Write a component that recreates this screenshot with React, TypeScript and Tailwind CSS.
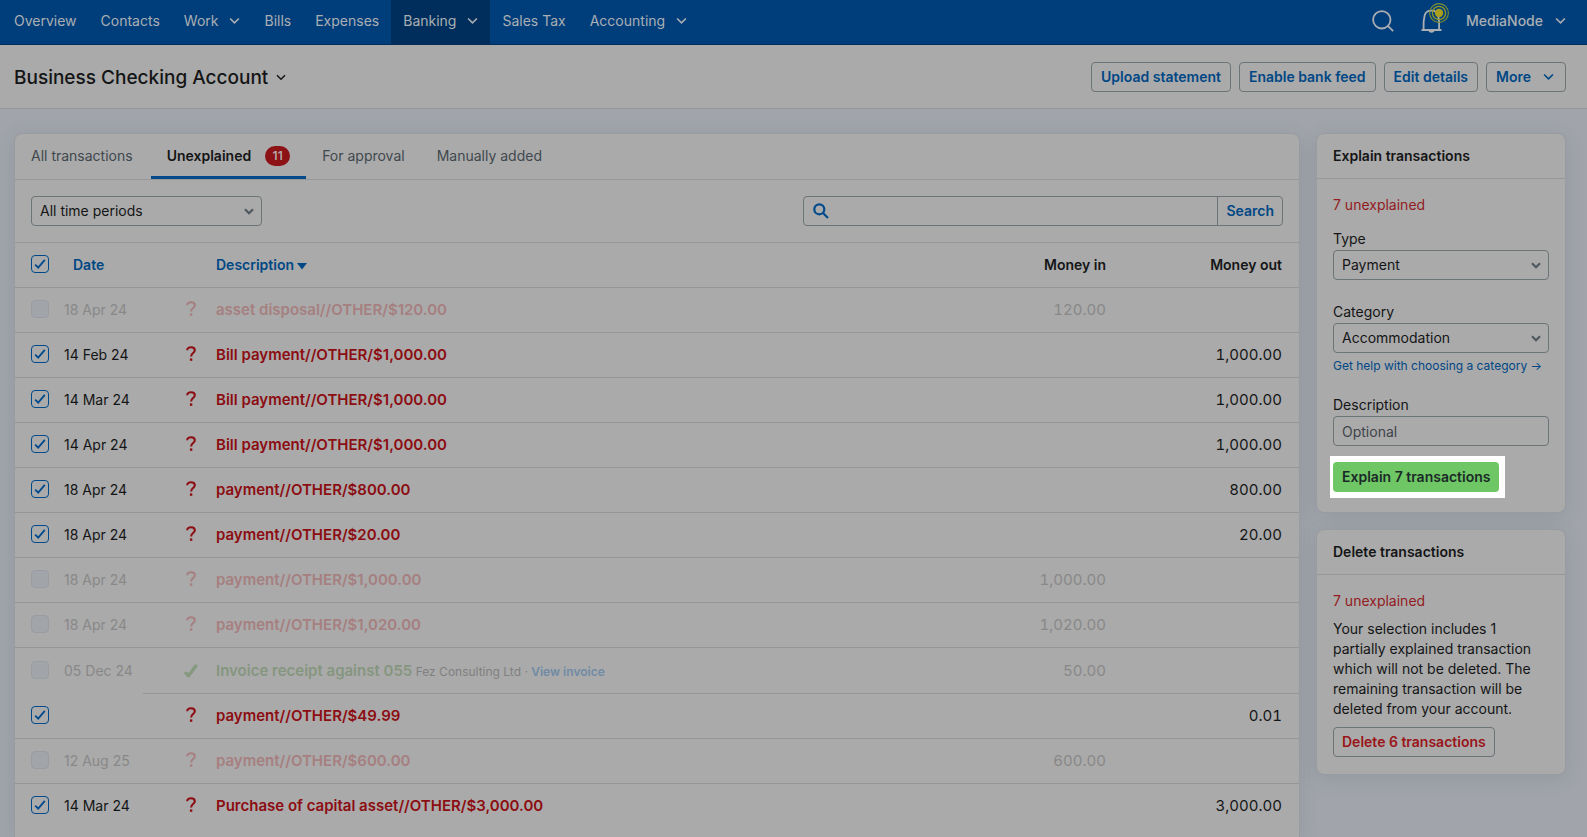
import React from 'react';
import clsx from 'clsx';

interface Transaction {
    id: number;
    date: string;
    title: string;
    moneyIn?: string;
    moneyOut?: string;
    selected?: boolean;
    explained?: boolean;
    contact?: string;
    partial?: boolean;
}

const navItems = [
    { label: 'Overview' },
    { label: 'Contacts' },
    { label: 'Work', menu: true },
    { label: 'Bills' },
    { label: 'Expenses' },
    { label: 'Banking', menu: true, active: true },
    { label: 'Sales Tax' },
    { label: 'Accounting', menu: true },
];

const transactions: Transaction[] = [
    { id: 1, date: '18 Apr 24', title: 'asset disposal//OTHER/$120.00', moneyIn: '120.00' },
    { id: 2, date: '14 Feb 24', title: 'Bill payment//OTHER/$1,000.00', moneyOut: '1,000.00', selected: true },
    { id: 3, date: '14 Mar 24', title: 'Bill payment//OTHER/$1,000.00', moneyOut: '1,000.00', selected: true },
    { id: 4, date: '14 Apr 24', title: 'Bill payment//OTHER/$1,000.00', moneyOut: '1,000.00', selected: true },
    { id: 5, date: '18 Apr 24', title: 'payment//OTHER/$800.00', moneyOut: '800.00', selected: true },
    { id: 6, date: '18 Apr 24', title: 'payment//OTHER/$20.00', moneyOut: '20.00', selected: true },
    { id: 7, date: '18 Apr 24', title: 'payment//OTHER/$1,000.00', moneyIn: '1,000.00' },
    { id: 8, date: '18 Apr 24', title: 'payment//OTHER/$1,020.00', moneyIn: '1,020.00' },
    { id: 9, date: '05 Dec 24', title: 'Invoice receipt against 055', moneyIn: '50.00', explained: true, contact: 'Fez Consulting Ltd' },
    { id: 10, date: '', title: 'payment//OTHER/$49.99', moneyOut: '0.01', selected: true, partial: true },
    { id: 11, date: '12 Aug 25', title: 'payment//OTHER/$600.00', moneyIn: '600.00' },
    { id: 12, date: '14 Mar 24', title: 'Purchase of capital asset//OTHER/$3,000.00', moneyOut: '3,000.00', selected: true },
];

function Chevron({ className }: { className?: string }) {
    return (
        <svg viewBox="0 0 12 8" fill="none" stroke="currentColor" strokeWidth="1.8" className={clsx('shrink-0', className || 'h-2 w-3')} aria-hidden="true">
            <path d="M1.2 1.3 6 6.1l4.8-4.8" />
        </svg>
    );
}

function CheckBox({ label, checked, disabled }: { label: string; checked?: boolean; disabled?: boolean }) {
    return (
        <span className="mb-0.5 grid w-[18px] place-items-center">
            <input
                type="checkbox"
                aria-label={label}
                defaultChecked={checked}
                disabled={disabled}
                className="peer col-start-1 row-start-1 h-[18px] w-[18px] appearance-none rounded border border-[#004a8c] disabled:border-[#999da2] disabled:bg-[#a1a4a8]"
            />
            <svg viewBox="0 0 12 12" fill="none" stroke="#004a8c" strokeWidth="1.8" className="pointer-events-none col-start-1 row-start-1 hidden h-3 w-3 peer-checked:block" aria-hidden="true">
                <path d="M1.2 6.6 4.2 9.6 10.8 1.8" />
            </svg>
        </span>
    );
}

function Select({ id, value, label }: { id: string; value: string; label?: string }) {
    return (
        <span className="grid items-center">
            <select id={id} aria-label={label} className="col-start-1 row-start-1 h-[30px] w-full appearance-none rounded border border-[#6d7478] bg-transparent px-2 text-[#141516]">
                <option>{value}</option>
            </select>
            <svg viewBox="0 0 10 7" fill="none" stroke="#4f595f" strokeWidth="2.2" className="pointer-events-none col-start-1 row-start-1 mr-2 h-[7px] w-2.5 justify-self-end" aria-hidden="true">
                <path d="M1 1.2 5 5.2l4-4" />
            </svg>
        </span>
    );
}

function Button({ children, className }: { children: React.ReactNode; className?: string }) {
    return (
        <button type="button" className={clsx('flex h-[30px] items-center rounded border border-[#6d7478] font-semibold whitespace-nowrap', className || 'px-[9px] text-[#004785]')}>
            {children}
        </button>
    );
}

function Panel({ title, children }: { title: string; children: React.ReactNode }) {
    return (
        <section className="rounded-lg border border-[#989ba0] bg-[#aaaaaa] shadow-[0_4px_20px_rgba(40,60,90,0.12)]">
            <h2 className="flex h-[45px] items-center border-b border-[#97989a] px-4 font-semibold">{title}</h2>
            <div className="px-4 pt-4 pb-[17px]">{children}</div>
        </section>
    );
}

function TransactionRow({ item }: { item: Transaction }) {
    const border = 'border-t border-[#959697]';
    return (
        <tr className={clsx('text-[15px]', item.contact ? 'h-[46px]' : 'h-[45px]', item.selected ? 'text-[#141516]' : 'text-[#888888]')}>
            <td className={clsx('pl-4', !item.partial && border)}>
                <CheckBox label={'Select ' + item.title} checked={item.selected} disabled={!item.selected} />
            </td>
            <td className={clsx('text-sm whitespace-nowrap', !item.partial && border)}>{item.date}</td>
            <td className={border}>
                {item.explained ? (
                    <svg viewBox="0 0 14 14" fill="none" stroke="#85997f" strokeWidth="3.4" strokeLinecap="round" strokeLinejoin="round" className="ml-[41px] h-[14px] w-[14px]" aria-label="Explained">
                        <path d="M2 9.2 4.6 11.8 11.8 2" />
                    </svg>
                ) : (
                    <svg viewBox="0 0 10 15" fill="none" stroke={item.selected ? '#8c0d12' : '#a67f80'} strokeWidth="2.1" className="ml-[43px] mb-1 h-[15px] w-2.5" aria-label="Unexplained">
                        <path d="M1.2 4.2C1.2 2.3 2.8 1.2 5 1.2s3.8 1.1 3.8 3c0 2.9-3.7 2.7-3.7 6.2" />
                        <path d="M3.9 13.6h2.4" strokeWidth="2.4" />
                    </svg>
                )}
            </td>
            <td className={clsx('font-semibold', border, item.explained ? 'text-[#85967f]' : item.selected ? 'text-[#8c0d12]' : 'text-[#a67f80]')}>
                {item.title}
                {item.contact && (
                    <span className="text-xs font-normal text-[#808080]">
                        {' '}{item.contact} · <a href="#invoice" className="font-semibold text-[#708aa5]">View invoice</a>
                    </span>
                )}
            </td>
            <td className={clsx('text-right tabular-nums', border)}>{item.moneyIn}</td>
            <td className={clsx('pr-[17px] text-right tabular-nums', border)}>{item.moneyOut}</td>
        </tr>
    );
}

function TopBar() {
    return (
        <header className="flex h-[45px] items-stretch border-b border-[#002c57] bg-[#003e7b] pr-[21px] pl-0.5 text-[#aaaeb3]">
            <nav className="flex flex-1 items-stretch">
                {navItems.map((item) => (
                    <a key={item.label} href="#nav" className={clsx('flex items-center gap-[11px] px-3 pb-0.5', item.active && 'bg-[#002e5c]')}>
                        {item.label}
                        {item.menu && <Chevron className="h-2 w-[11px]" />}
                    </a>
                ))}
            </nav>
            <div className="flex items-center">
                <button type="button" aria-label="Search" className="mr-[27px] pb-0.5">
                    <svg viewBox="0 0 22 22" fill="none" stroke="currentColor" strokeWidth="1.8" className="h-[22px] w-[22px]">
                        <circle cx="9.8" cy="9.8" r="8.7" />
                        <path d="m15.8 15.8 5.4 5.4" />
                    </svg>
                </button>
                <button type="button" aria-label="Notifications" className="mr-[17px]">
                    <svg viewBox="0 0 28 32" fill="none" className="h-8 w-7 overflow-visible">
                        <path d="M0.5 24H20.5M2.6 24v-8.4l1-6C4.3 6.400 6.500 4.600 10.300 4.600s6.300 1.800 6.900 5l.9 6V24" stroke="currentColor" strokeWidth="1.8" />
                        <path d="M7.400 24.600h6.200c-.4 1.600-1.500 2.200-3.100 2.200s-2.700-.6-3.100-2.200Z" fill="currentColor" />
                        <circle cx="18" cy="7" r="9.400" stroke="#7f8f32" strokeWidth="1.1" />
                        <circle cx="18" cy="7" r="6.600" stroke="#8f9928" strokeWidth="1.3" />
                        <circle cx="18" cy="7" r="4.200" fill="#aa9f1c" />
                    </svg>
                </button>
                <button type="button" className="flex items-center gap-3 pb-0.5 font-medium">
                    MediaNode
                    <Chevron className="h-2 w-[11px]" />
                </button>
            </div>
        </header>
    );
}

export default function App() {
    return (
        <div className="flex min-h-screen flex-col bg-[#a1a5ab] font-['Inter',sans-serif] text-sm leading-5 text-[#141516]">
            <TopBar />

            <div className="flex h-16 items-center justify-between border-b border-[#949699] bg-[#aaaaaa] pr-[21px] pl-[14px]">
                <h1 className="flex items-center gap-2 pt-0.5 text-[19px] font-medium">
                    Business Checking Account
                    <Chevron className="h-[7px] w-2.5" />
                </h1>
                <div className="flex gap-2">
                    <Button>Upload statement</Button>
                    <Button>Enable bank feed</Button>
                    <Button>Edit details</Button>
                    <Button>
                        <span className="mr-3">More</span>
                        <Chevron className="mr-0.5 h-2 w-[11px]" />
                    </Button>
                </div>
            </div>

            <div className="flex flex-1 gap-4 pt-6 pr-[21px] pl-[14px]">
                <main className="min-w-0 flex-1 rounded-t-lg border border-b-0 border-[#989ba0] bg-[#aaaaaa] shadow-[0_4px_20px_rgba(40,60,90,0.12)]">
                    <nav className="flex h-[46px] border-b border-[#97989a] text-[#40484e]">
                        <a href="#all" className="flex items-center pr-[18px] pb-0.5 pl-4">All transactions</a>
                        <a href="#unexplained" className="flex items-center gap-[14px] border-b-[3px] border-[#004a8c] px-4 pt-px font-semibold text-[#141516]">
                            Unexplained
                            <span className="flex h-5 w-[25px] items-center justify-center rounded-full bg-[#8c1216] text-xs text-[#b4a8a8]">11</span>
                        </a>
                        <a href="#approval" className="flex items-center px-4 pb-0.5">For approval</a>
                        <a href="#manual" className="flex items-center px-4 pb-0.5">Manually added</a>
                    </nav>

                    <div className="flex items-center justify-between border-b border-[#97989a] p-4">
                        <div className="w-[231px]">
                            <Select id="period" label="Time period" value="All time periods" />
                        </div>
                        <form className="flex h-[30px] w-[480px] items-center rounded border border-[#6d7478]">
                            <svg viewBox="0 0 16 16" fill="none" stroke="#004a8c" strokeWidth="2.2" className="ml-[9px] h-4 w-4 shrink-0" aria-hidden="true">
                                <circle cx="6.3" cy="6.3" r="5" />
                                <path d="m10 10 5 5" />
                            </svg>
                            <input type="search" aria-label="Search transactions" className="h-full min-w-0 flex-1 bg-transparent px-2 outline-none" />
                            <button type="button" className="h-full border-l border-[#6d7478] px-2 font-semibold text-[#004785]">Search</button>
                        </form>
                    </div>

                    <table className="w-full table-fixed border-separate border-spacing-0">
                        <thead>
                            <tr className="h-[44px] text-left">
                                <th className="w-[49px] pl-4"><CheckBox label="Select all" checked /></th>
                                <th className="w-[79px] pl-[9px] font-semibold"><a href="#date" className="text-[#004785]">Date</a></th>
                                <th className="w-[73px]"></th>
                                <th className="font-semibold">
                                    <a href="#description" className="flex items-center gap-[3px] text-[#004785]">
                                        Description
                                        <svg viewBox="0 0 10 7" fill="currentColor" className="mt-[3px] h-[7px] w-2.5" aria-hidden="true"><path d="M0 0h10L5 6.6Z" /></svg>
                                    </a>
                                </th>
                                <th className="w-[140px] text-right font-semibold">Money in</th>
                                <th className="w-[193px] pr-[17px] text-right font-semibold">Money out</th>
                            </tr>
                        </thead>
                        <tbody>
                            {transactions.map((item) => (
                                <TransactionRow key={item.id} item={item} />
                            ))}
                        </tbody>
                    </table>
                </main>

                <aside className="flex w-[250px] shrink-0 flex-col gap-4">
                    <Panel title="Explain transactions">
                        <p className="text-[#931a1f]">7 unexplained</p>
                        <div className="mt-[14px]">
                            <label htmlFor="type" className="mb-px block">Type</label>
                            <Select id="type" value="Payment" />
                        </div>
                        <div className="mt-[22px]">
                            <label htmlFor="category" className="mb-px block">Category</label>
                            <Select id="category" value="Accommodation" />
                            <a href="#help" className="mt-[3px] block text-xs leading-5 whitespace-nowrap text-[#004785]">Get help with choosing a category →</a>
                        </div>
                        <div className="mt-[19px]">
                            <label htmlFor="description" className="mb-px block">Description</label>
                            <input id="description" type="text" placeholder="Optional" className="block h-[30px] w-full rounded border border-[#6d7478] bg-transparent px-2 placeholder:text-[#40444a]" />
                        </div>
                        {/* spotlight around the primary action */}
                        <div className="mt-[10px] -mb-[3px] -ml-[3px] w-fit bg-white py-1.5 pr-1.5 pl-[3px]">
                            <button type="button" className="block h-[30px] rounded bg-[#6ec664] px-[9px] font-semibold whitespace-nowrap text-[#1b2a28]">Explain 7 transactions</button>
                        </div>
                    </Panel>

                    <Panel title="Delete transactions">
                        <p className="text-[#931a1f]">7 unexplained</p>
                        <p className="mt-2 mb-2">
                            Your selection includes 1 partially explained transaction which will not be deleted. The remaining transaction will be deleted from your account.
                        </p>
                        <Button className="px-2 text-[#9a1418]">Delete 6 transactions</Button>
                    </Panel>
                </aside>
            </div>
        </div>
    );
}
